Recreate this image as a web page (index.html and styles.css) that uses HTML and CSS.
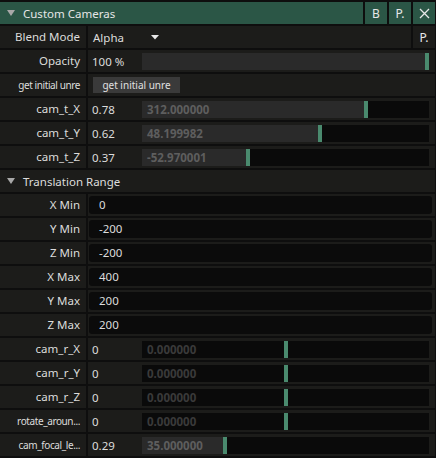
FILE: index.html
```html
<!DOCTYPE html>
<html>
<head>
<meta charset="utf-8">
<link rel="stylesheet" href="styles.css">
</head>
<body>
<div class="panel">
  <div class="header">
    <div class="title"><span class="tri"></span>Custom Cameras</div>
    <div class="hbtn">B</div>
    <div class="hbtn">P.</div>
    <div class="hbtn"><svg width="11" height="11" viewBox="0 0 11 11"><path d="M1 1L10 10M10 1L1 10" stroke="#e8e8e8" stroke-width="1.3"/></svg></div>
  </div>

  <div class="row">
    <div class="label">Blend Mode</div>
    <div class="value">
      <div class="dropdown">Alpha<svg class="caret" width="8" height="5" viewBox="0 0 8 5"><path d="M0 0H8L4 4.5Z" fill="#e8e8e8"/></svg></div>
    </div>
    <div class="rbtn">P.</div>
  </div>

  <div class="row">
    <div class="label">Opacity</div>
    <div class="value">
      <div class="num">100 %</div>
      <div class="bar"><div class="fill" style="width:100%"></div><div class="handle" style="left:calc(100% - 4px)"></div></div>
    </div>
  </div>

  <div class="row">
    <div class="label small">get initial unre</div>
    <div class="value">
      <div class="btn">get initial unre</div>
    </div>
  </div>

  <div class="row">
    <div class="label">cam_t_X</div>
    <div class="value">
      <div class="num">0.78</div>
      <div class="bar"><div class="fill" style="width:78%"></div><div class="handle" style="left:calc(78% - 2px)"></div><span class="bartext">312.000000</span></div>
    </div>
  </div>

  <div class="row">
    <div class="label">cam_t_Y</div>
    <div class="value">
      <div class="num">0.62</div>
      <div class="bar"><div class="fill" style="width:62%"></div><div class="handle" style="left:calc(62% - 2px)"></div><span class="bartext">48.199982</span></div>
    </div>
  </div>

  <div class="row">
    <div class="label">cam_t_Z</div>
    <div class="value">
      <div class="num">0.37</div>
      <div class="bar"><div class="fill" style="width:37%"></div><div class="handle" style="left:calc(37% - 2px)"></div><span class="bartext">-52.970001</span></div>
    </div>
  </div>

  <div class="row section">
    <span class="tri"></span>Translation Range
  </div>

  <div class="row">
    <div class="label">X Min</div>
    <div class="value"><div class="field">0</div></div>
  </div>
  <div class="row">
    <div class="label">Y Min</div>
    <div class="value"><div class="field">-200</div></div>
  </div>
  <div class="row">
    <div class="label">Z Min</div>
    <div class="value"><div class="field">-200</div></div>
  </div>
  <div class="row">
    <div class="label">X Max</div>
    <div class="value"><div class="field">400</div></div>
  </div>
  <div class="row">
    <div class="label">Y Max</div>
    <div class="value"><div class="field">200</div></div>
  </div>
  <div class="row">
    <div class="label">Z Max</div>
    <div class="value"><div class="field">200</div></div>
  </div>

  <div class="row">
    <div class="label">cam_r_X</div>
    <div class="value">
      <div class="num">0</div>
      <div class="bar"><div class="handle" style="left:calc(50% - 2px)"></div><span class="bartext dim">0.000000</span></div>
    </div>
  </div>
  <div class="row">
    <div class="label">cam_r_Y</div>
    <div class="value">
      <div class="num">0</div>
      <div class="bar"><div class="handle" style="left:calc(50% - 2px)"></div><span class="bartext dim">0.000000</span></div>
    </div>
  </div>
  <div class="row">
    <div class="label">cam_r_Z</div>
    <div class="value">
      <div class="num">0</div>
      <div class="bar"><div class="handle" style="left:calc(50% - 2px)"></div><span class="bartext dim">0.000000</span></div>
    </div>
  </div>
  <div class="row">
    <div class="label small">rotate_aroun...</div>
    <div class="value">
      <div class="num">0</div>
      <div class="bar"><div class="handle" style="left:calc(50% - 2px)"></div><span class="bartext dim">0.000000</span></div>
    </div>
  </div>
  <div class="row">
    <div class="label small">cam_focal_le...</div>
    <div class="value">
      <div class="num">0.29</div>
      <div class="bar"><div class="fill" style="width:29%"></div><div class="handle" style="left:calc(29% - 2px)"></div><span class="bartext">35.000000</span></div>
    </div>
  </div>
</div>
</body>
</html>
```

FILE: styles.css
```css
html, body {
  margin: 0;
  padding: 0;
  background: #0e0e0e;
}
body {
  width: 436px;
  height: 458px;
  overflow: hidden;
  font-family: "Noto Sans", "Open Sans", sans-serif;
  font-size: 11.5px;
  color: #dcdcdc;
}
.panel {
  width: 435px;
  padding-top: 2px;
  display: flex;
  flex-direction: column;
  gap: 2px;
}
.header {
  height: 22px;
  display: flex;
  gap: 2px;
}
.title {
  flex: 1;
  background: #2b5646;
  display: flex;
  align-items: center;
  color: #e6e6e6;
}
.tri {
  display: inline-block;
  width: 0;
  height: 0;
  border-left: 4px solid transparent;
  border-right: 4px solid transparent;
  border-top: 6px solid #a8a8a8;
  margin: 0 8px 0 7px;
}
.hbtn {
  width: 22px;
  background: #2b5646;
  color: #e8e8e8;
  font-size: 12px;
  display: flex;
  align-items: center;
  justify-content: center;
}
.row {
  height: 22px;
  display: flex;
  gap: 2px;
}
.label {
  width: 80px;
  padding-right: 6px;
  background: #1c1c1a;
  text-align: right;
  line-height: 22px;
  white-space: nowrap;
  overflow: hidden;
}
.label.small {
  font-size: 10px;
  letter-spacing: -0.4px;
}
.value {
  flex: 1;
  background: #1c1c1a;
  display: flex;
  align-items: center;
  min-width: 0;
}
.rbtn {
  width: 22px;
  background: #1c1c1a;
  display: flex;
  align-items: center;
  justify-content: center;
  color: #e8e8e8;
  font-size: 12px;
}
.dropdown {
  padding-left: 5px;
  display: flex;
  align-items: center;
}
.caret {
  margin-left: 27px;
}
.num {
  width: 50px;
  padding-left: 4px;
  flex: none;
}
.bar {
  position: relative;
  flex: 1;
  height: 17px;
  margin-right: 6px;
  margin-top: 1px;
  background: #0a0a0a;
}
.fill {
  position: absolute;
  left: 0;
  top: 0;
  bottom: 0;
  background: #2a2a2a;
}
.handle {
  position: absolute;
  top: 0;
  bottom: 0;
  width: 4px;
  background: #4a8a6e;
}
.bartext {
  position: absolute;
  left: 5px;
  top: 0;
  line-height: 17px;
  font-size: 11.5px;
  font-weight: 700;
  color: #5e5e5e;
}
.bartext.dim {
  color: #3a3a3a;
}
.btn {
  margin-left: 5px;
  width: 87px;
  height: 16px;
  background: #3a3a3a;
  font-size: 10px;
  line-height: 16px;
  text-align: center;
  color: #e0e0e0;
}
.field {
  flex: 1;
  height: 18px;
  margin: 0 3px 0 1px;
  border-radius: 3px;
  background: #0b0b0b;
  padding-left: 10px;
  line-height: 18px;
}
.section {
  background: #1c1c1a;
  align-items: center;
  gap: 0;
}
```
